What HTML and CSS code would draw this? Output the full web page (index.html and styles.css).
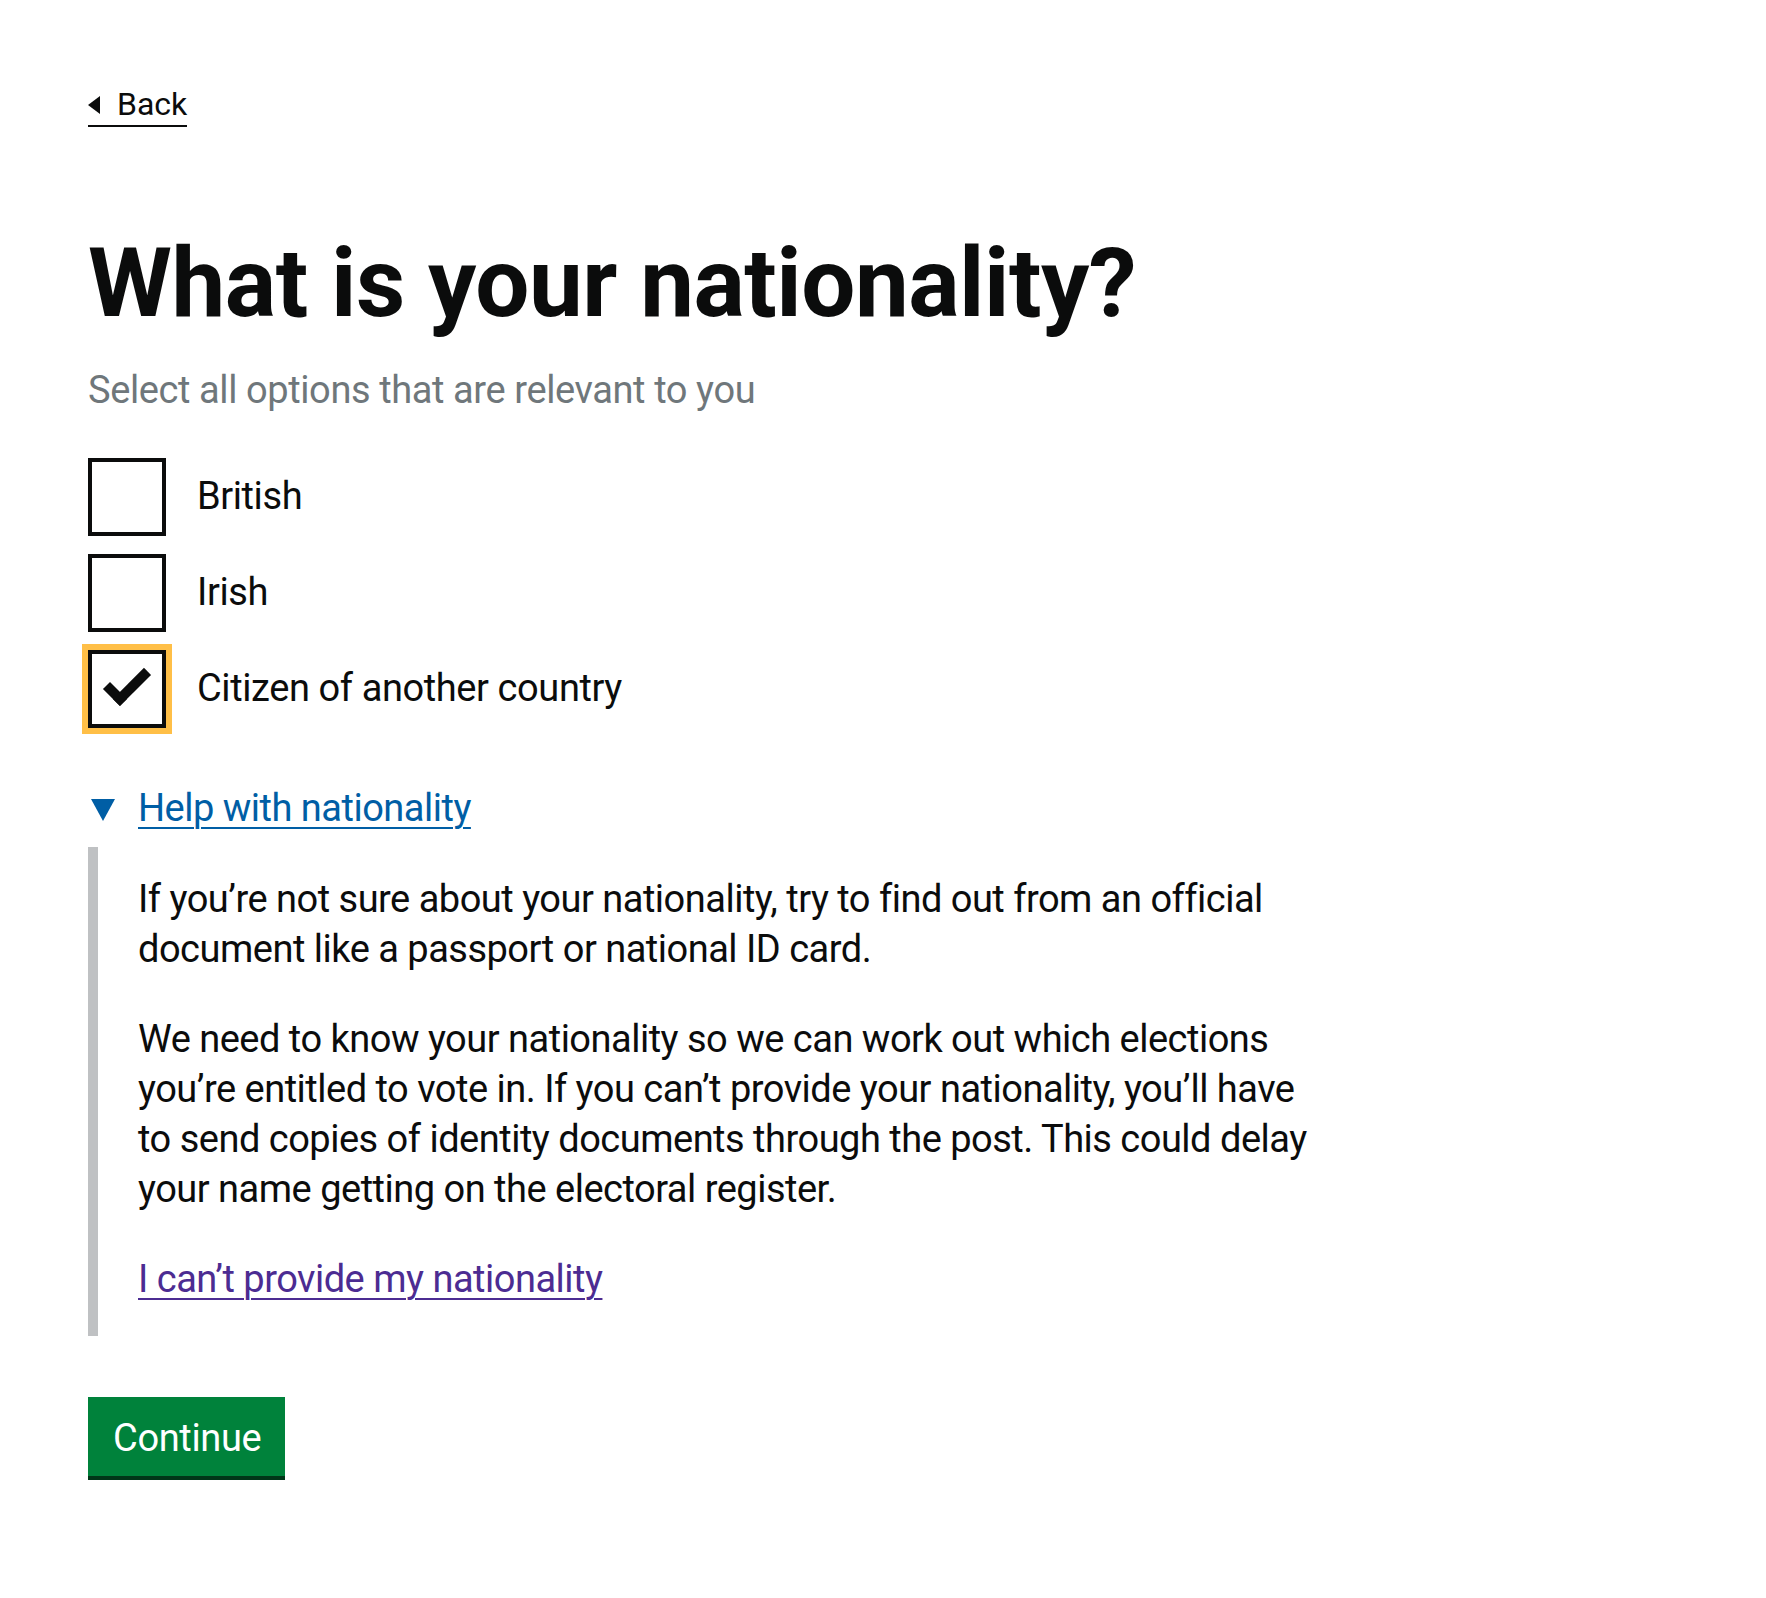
FILE: index.html
```html
<!DOCTYPE html>
<html lang="en">
<head>
  <meta charset="UTF-8">
  <meta name="viewport" content="width=device-width, initial-scale=1.0">
  <title>What is your nationality?</title>
  <link rel="stylesheet" href="styles.css">
</head>
<body>
  <div class="page">
    <a class="back-link" href="#">Back</a>
    <main class="main">
      <form action="#" method="post">
        <div class="form-group">
          <fieldset class="fieldset">
            <legend class="legend">
              <h1 class="heading-xl">What is your nationality?</h1>
            </legend>
            <span class="hint">Select all options that are relevant to you</span>
            <div class="checkboxes">
              <div class="checkbox">
                <input class="checkbox__input" id="nationality-british" name="nationality" type="checkbox" value="british">
                <label class="checkbox__label" for="nationality-british">British</label>
              </div>
              <div class="checkbox">
                <input class="checkbox__input" id="nationality-irish" name="nationality" type="checkbox" value="irish">
                <label class="checkbox__label" for="nationality-irish">Irish</label>
              </div>
              <div class="checkbox">
                <input class="checkbox__input" id="nationality-other" name="nationality" type="checkbox" value="other" checked>
                <label class="checkbox__label is-focused" for="nationality-other">Citizen of another country</label>
              </div>
            </div>
          </fieldset>
        </div>

        <details class="details" open>
          <summary class="details__summary">
            <span class="details__summary-text">Help with nationality</span>
          </summary>
          <div class="details__text">
            <p class="body">If you’re not sure about your nationality, try to find out from an official document like a passport or national ID card.</p>
            <p class="body">We need to know your nationality so we can work out which elections you’re entitled to vote in. If you can’t provide your nationality, you’ll have to send copies of identity documents through the post. This could delay your name getting on the electoral register.</p>
            <p class="body"><a class="link link--visited" href="#">I can’t provide my nationality</a></p>
          </div>
        </details>

        <button class="button" type="submit">Continue</button>
      </form>
    </main>
  </div>
</body>
</html>
```

FILE: styles.css
```css
body {
  margin: 0;
  background: #ffffff;
  color: #0b0c0c;
  font-family: Roboto, "Liberation Sans", Arial, sans-serif;
}
.page {
  padding: 54px 88px 80px;
}
.back-link {
  display: inline-block;
  position: relative;
  margin: 30px 0 29px;
  padding: 0 0 1px 29px;
  font-size: 32px;
  line-height: 40px;
  color: #0b0c0c;
  text-decoration: none;
  border-bottom: 2px solid #0b0c0c;
}
.back-link::before {
  content: "";
  position: absolute;
  left: 0;
  top: 12px;
  width: 0;
  height: 0;
  border-style: solid;
  border-width: 9px 12px 9px 0;
  border-color: transparent #0b0c0c transparent transparent;
}
.main {
  display: block;
  padding-top: 77px;
}
.form-group {
  margin-bottom: 55px;
}
.fieldset {
  margin: 0;
  padding: 0;
  border: 0;
  min-width: 0;
}
.legend {
  padding: 0;
}
.heading-xl {
  margin: 0 0 32px;
  font-size: 96px;
  line-height: 100px;
  font-weight: 700;
  letter-spacing: -0.5px;
}
.hint {
  display: block;
  margin-bottom: 43px;
  font-size: 38px;
  line-height: 50px;
  letter-spacing: -0.4px;
  color: #6f777b;
}
.checkbox {
  position: relative;
  min-height: 78px;
  margin-bottom: 18px;
}
.checkbox:last-child {
  margin-bottom: 0;
}
.checkbox__input {
  position: absolute;
  top: 0;
  left: 0;
  width: 78px;
  height: 78px;
  margin: 0;
  opacity: 0;
  cursor: pointer;
}
.checkbox__label {
  display: inline-block;
  padding: 13px 0 15px 109px;
  font-size: 38px;
  line-height: 50px;
  letter-spacing: -0.4px;
  cursor: pointer;
}
.checkbox__label::before {
  content: "";
  box-sizing: border-box;
  position: absolute;
  top: 0;
  left: 0;
  width: 78px;
  height: 78px;
  border: 4px solid #0b0c0c;
  background: #ffffff;
}
.checkbox__label::after {
  content: "";
  position: absolute;
  top: 20px;
  left: 17px;
  width: 34px;
  height: 14px;
  border: solid #0b0c0c;
  border-width: 0 0 10px 10px;
  border-top-color: transparent;
  transform: rotate(-45deg);
  opacity: 0;
}
.checkbox__input:checked + .checkbox__label::after {
  opacity: 1;
}
.checkbox__label.is-focused::before {
  box-shadow: 0 0 0 6px #ffbf47;
}
.details {
  display: block;
  max-width: 1237px;
  margin-bottom: 61px;
  font-size: 38px;
  line-height: 50px;
  letter-spacing: -0.5px;
}
.details__summary {
  display: inline-block;
  position: relative;
  margin-bottom: 14px;
  padding-left: 50px;
  color: #005ea5;
  cursor: pointer;
  list-style: none;
}
.details__summary::-webkit-details-marker {
  display: none;
}
.details__summary::before {
  content: "";
  position: absolute;
  left: 3px;
  top: 16px;
  width: 0;
  height: 0;
  border-style: solid;
  border-width: 22px 12.5px 0 12.5px;
  border-color: #005ea5 transparent transparent transparent;
}
.details__summary-text {
  text-decoration: underline;
  text-decoration-thickness: 2px;
  text-underline-offset: 6px;
}
.details__text {
  padding: 27px 0 32px 40px;
  border-left: 10px solid #bfc1c3;
}
.body {
  margin: 0 0 40px;
}
.body:last-child {
  margin-bottom: 0;
}
.link {
  color: #005ea5;
  text-decoration: underline;
  text-decoration-thickness: 2px;
  text-underline-offset: 6px;
}
.link--visited {
  color: #4c2c92;
}
.button {
  display: inline-block;
  margin: 0;
  padding: 16px 24px 13px 25px;
  border: 0;
  border-radius: 0;
  background: #00823b;
  box-shadow: 0 4px 0 #003618;
  color: #ffffff;
  font-family: inherit;
  font-size: 38px;
  line-height: 50px;
  letter-spacing: -0.35px;
  cursor: pointer;
}
```
